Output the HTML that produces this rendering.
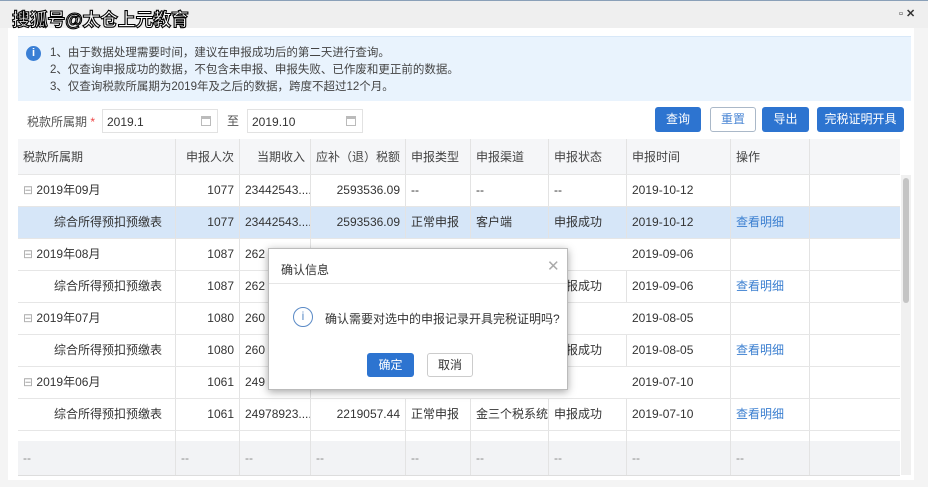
<!DOCTYPE html>
<html><head><meta charset="utf-8">
<style>
*{margin:0;padding:0;box-sizing:border-box}
body{width:928px;height:487px;overflow:hidden;background:#fff;font-family:"Liberation Sans","Noto Sans CJK SC",sans-serif;font-size:12px;color:#333;position:relative}
.abs{position:absolute}
.top{left:0;top:0;width:928px;height:28px;background:#efefef;border-top:1px solid #8aa0b8}
.wm{left:12px;top:6px;font-size:18px;font-weight:bold;color:#fff;-webkit-text-stroke:1.1px #000;letter-spacing:-0.3px}
.info{left:18px;top:36px;width:893px;height:65px;background:#e9f3fd;border-top:1px solid #d8e8f8}
.info p{position:absolute;left:32px;font-size:11.5px;color:#444}
.ic{left:8px;top:9px;width:15px;height:15px;border-radius:50%;background:#3a7fd5;color:#fff;font-size:11px;font-weight:bold;text-align:center;line-height:15px}
.inp{height:24px;border:1px solid #e2e2e2;background:#fff;font-size:12px;line-height:24px;padding-left:4px;color:#333}
.cal{position:absolute;right:6px;top:6px;width:10px;height:10px;border:1px solid #bbb;border-top:3px solid #bbb}
.btn{top:107px;height:25px;border-radius:3px;background:#2d74d0;color:#fff;font-size:12px;text-align:center;line-height:25px}
.tbl{left:18px;top:139px;width:882px}
.row{position:absolute;left:0;width:882px;height:32px;border-bottom:1px solid #e6e6e6}
.c{position:absolute;top:0;height:100%;border-right:1px solid #e3e3e3;line-height:31px;padding:0 5px;white-space:nowrap;overflow:hidden}
.r{text-align:right}
.hd{background:#f5f6f8;height:36px}
.hd .c{line-height:36px;color:#444}
.sel{background:#d6e6f8}
.lnk{color:#3b7fd0}
.foot{background:#f2f3f5}
.foot .c{color:#888}
.dlg{left:268px;top:248px;width:300px;height:142px;background:#fff;border:1px solid #bbb;box-shadow:0 2px 8px rgba(0,0,0,.35)}
</style></head><body>
<div class="abs top"></div>
<div class="abs" style="left:0;top:28px;width:8px;height:459px;background:#f4f4f4"></div>
<div class="abs" style="left:914px;top:28px;width:14px;height:459px;background:#f4f4f4"></div>
<div class="abs" style="left:899px;top:7px;font-size:11px;font-weight:bold;color:#333">▫ ✕</div>
<div class="abs wm">搜狐号@太仓上元教育</div>
<div class="abs info">
<div class="abs ic">i</div>
<p style="top:7px">1、由于数据处理需要时间，建议在申报成功后的第二天进行查询。</p>
<p style="top:24px">2、仅查询申报成功的数据，不包含未申报、申报失败、已作废和更正前的数据。</p>
<p style="top:41px">3、仅查询税款所属期为2019年及之后的数据，跨度不超过12个月。</p>
</div>
<div class="abs" style="left:27px;top:113px;color:#555">税款所属期 <span style="color:#e44">*</span></div>
<div class="abs inp" style="left:102px;top:109px;width:116px">2019.1<span class="cal"></span></div>
<div class="abs" style="left:227px;top:112px;color:#555">至</div>
<div class="abs inp" style="left:247px;top:109px;width:116px">2019.10<span class="cal"></span></div>
<div class="abs btn" style="left:655px;width:46px">查询</div>
<div class="abs btn" style="left:710px;width:46px;background:#fff;border:1px solid #aab8c8;color:#4a86d4;line-height:23px">重置</div>
<div class="abs btn" style="left:762px;width:47px">导出</div>
<div class="abs btn" style="left:817px;width:87px">完税证明开具</div>

<div class="abs tbl">
<div class="row hd" style="top:0"><div class="c" style="left:0;width:158px">税款所属期</div><div class="c r" style="left:158px;width:64px">申报人次</div><div class="c r" style="left:222px;width:71px">当期收入</div><div class="c r" style="left:293px;width:95px">应补（退）税额</div><div class="c" style="left:388px;width:65px">申报类型</div><div class="c" style="left:453px;width:78px">申报渠道</div><div class="c" style="left:531px;width:78px">申报状态</div><div class="c" style="left:609px;width:104px">申报时间</div><div class="c" style="left:713px;width:79px">操作</div></div>

<div class="row" style="top:36px"><div class="c" style="left:0;width:158px"><span style="color:#aaa">⊟</span> 2019年09月</div><div class="c r" style="left:158px;width:64px">1077</div><div class="c" style="left:222px;width:71px">23442543....</div><div class="c r" style="left:293px;width:95px">2593536.09</div><div class="c" style="left:388px;width:65px">--</div><div class="c" style="left:453px;width:78px">--</div><div class="c" style="left:531px;width:78px">--</div><div class="c" style="left:609px;width:104px">2019-10-12</div><div class="c" style="left:713px;width:79px"></div></div>
<div class="row sel" style="top:68px"><div class="c" style="left:0;width:158px;padding-left:36px">综合所得预扣预缴表</div><div class="c r" style="left:158px;width:64px">1077</div><div class="c" style="left:222px;width:71px">23442543....</div><div class="c r" style="left:293px;width:95px">2593536.09</div><div class="c" style="left:388px;width:65px">正常申报</div><div class="c" style="left:453px;width:78px">客户端</div><div class="c" style="left:531px;width:78px">申报成功</div><div class="c" style="left:609px;width:104px">2019-10-12</div><div class="c lnk" style="left:713px;width:79px">查看明细</div></div>

<div class="row" style="top:100px"><div class="c" style="left:0;width:158px"><span style="color:#aaa">⊟</span> 2019年08月</div><div class="c r" style="left:158px;width:64px">1087</div><div class="c" style="left:222px;width:71px">262</div><div class="c" style="left:609px;width:104px">2019-09-06</div><div class="c" style="left:713px;width:79px"></div></div>
<div class="row" style="top:132px"><div class="c" style="left:0;width:158px;padding-left:36px">综合所得预扣预缴表</div><div class="c r" style="left:158px;width:64px">1087</div><div class="c" style="left:222px;width:71px">262</div><div class="c" style="left:531px;width:78px">申报成功</div><div class="c" style="left:609px;width:104px">2019-09-06</div><div class="c lnk" style="left:713px;width:79px">查看明细</div></div>
<div class="row" style="top:164px"><div class="c" style="left:0;width:158px"><span style="color:#aaa">⊟</span> 2019年07月</div><div class="c r" style="left:158px;width:64px">1080</div><div class="c" style="left:222px;width:71px">260</div><div class="c" style="left:609px;width:104px">2019-08-05</div><div class="c" style="left:713px;width:79px"></div></div>
<div class="row" style="top:196px"><div class="c" style="left:0;width:158px;padding-left:36px">综合所得预扣预缴表</div><div class="c r" style="left:158px;width:64px">1080</div><div class="c" style="left:222px;width:71px">260</div><div class="c" style="left:531px;width:78px">申报成功</div><div class="c" style="left:609px;width:104px">2019-08-05</div><div class="c lnk" style="left:713px;width:79px">查看明细</div></div>
<div class="row" style="top:228px"><div class="c" style="left:0;width:158px"><span style="color:#aaa">⊟</span> 2019年06月</div><div class="c r" style="left:158px;width:64px">1061</div><div class="c" style="left:222px;width:71px">249</div><div class="c" style="left:609px;width:104px">2019-07-10</div><div class="c" style="left:713px;width:79px"></div></div>
<div class="row" style="top:260px"><div class="c" style="left:0;width:158px;padding-left:36px">综合所得预扣预缴表</div><div class="c r" style="left:158px;width:64px">1061</div><div class="c" style="left:222px;width:71px">24978923....</div><div class="c r" style="left:293px;width:95px">2219057.44</div><div class="c" style="left:388px;width:65px">正常申报</div><div class="c" style="left:453px;width:78px">金三个税系统</div><div class="c" style="left:531px;width:78px">申报成功</div><div class="c" style="left:609px;width:104px">2019-07-10</div><div class="c lnk" style="left:713px;width:79px">查看明细</div></div>
<div class="row" style="top:292px;height:10px;border:0"><div class="c" style="left:0;width:158px"></div><div class="c" style="left:158px;width:64px"></div><div class="c" style="left:222px;width:71px"></div><div class="c" style="left:293px;width:95px"></div><div class="c" style="left:388px;width:65px"></div><div class="c" style="left:453px;width:78px"></div><div class="c" style="left:531px;width:78px"></div><div class="c" style="left:609px;width:104px"></div><div class="c" style="left:713px;width:79px"></div></div>
<div class="row foot" style="top:302px;height:35px;border-bottom:1px solid #ddd"><div class="c" style="left:0;width:158px;line-height:35px">--</div><div class="c" style="left:158px;width:64px;line-height:35px">--</div><div class="c" style="left:222px;width:71px;line-height:35px">--</div><div class="c" style="left:293px;width:95px;line-height:35px">--</div><div class="c" style="left:388px;width:65px;line-height:35px">--</div><div class="c" style="left:453px;width:78px;line-height:35px">--</div><div class="c" style="left:531px;width:78px;line-height:35px">--</div><div class="c" style="left:609px;width:104px;line-height:35px">--</div><div class="c" style="left:713px;width:79px;line-height:35px">--</div></div>
</div>
<div class="abs" style="left:901px;top:175px;width:10px;height:300px;background:#f0f0f0"></div>
<div class="abs" style="left:903px;top:178px;width:6px;height:125px;background:#c4c4c4;border-radius:3px"></div>
<div class="abs" style="left:0;top:480px;width:928px;height:7px;background:#f4f4f4"></div>

<div class="abs dlg">
<div class="abs" style="left:12px;top:12px;font-size:12px;color:#333">确认信息</div>
<div class="abs" style="left:278px;top:8px;font-size:15px;color:#aaa">✕</div>
<div class="abs" style="left:0;top:34px;width:298px;height:1px;background:#e6e6e6"></div>
<div class="abs" style="left:24px;top:58px;width:20px;height:20px;border:1.5px solid #5a8ac6;border-radius:50%;color:#5a8ac6;text-align:center;line-height:17px;font-size:12px">i</div>
<div class="abs" style="left:56px;top:61px;font-size:12px;color:#333;white-space:nowrap">确认需要对选中的申报记录开具完税证明吗?</div>
<div class="abs" style="left:98px;top:104px;width:47px;height:24px;background:#2d74d0;color:#fff;border-radius:3px;text-align:center;line-height:24px">确定</div>
<div class="abs" style="left:158px;top:104px;width:46px;height:24px;border:1px solid #ccc;border-radius:3px;text-align:center;line-height:22px">取消</div>
</div>
</body></html>
